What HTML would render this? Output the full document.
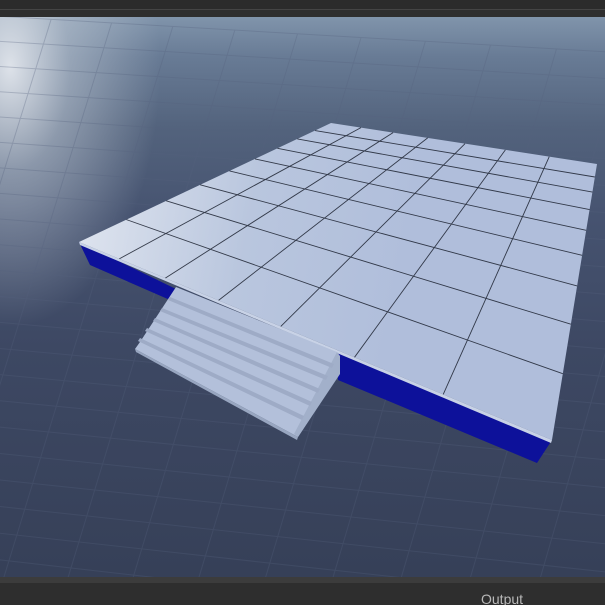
<!DOCTYPE html>
<html><head><style>
html,body{margin:0;padding:0;width:605px;height:605px;overflow:hidden;background:#2e2e2e;font-family:"Liberation Sans",sans-serif}
#top{position:absolute;left:0;top:0;width:605px;height:9px;background:#2b2b2b;border-bottom:1px solid #444}
#top2{position:absolute;left:0;top:10px;width:605px;height:7px;background:#2e2e2e}
#vp{position:absolute;left:0;top:17px;width:605px;height:560px;overflow:hidden;
background:
radial-gradient(ellipse 150px 260px at 10px 50px,rgba(228,232,238,.95),rgba(190,200,212,.55) 40%,rgba(150,165,185,0) 100%),
linear-gradient(180deg,#8094ab 0px,#687b95 40px,#53637d 110px,#465370 200px,#3d4863 330px,#364058 560px);}
#b1{position:absolute;left:0;top:577px;width:605px;height:6px;background:#3c3c3c}
#out{position:absolute;left:481px;top:592px;height:13px;line-height:15px;font-size:14px;color:#b8b8b8;overflow:hidden}
</style></head><body>
<div id="top"></div><div id="top2"></div>
<div id="vp">
<svg id="s" width="605" height="560" viewBox="0 17 605 560" xmlns="http://www.w3.org/2000/svg" style="display:block;overflow:hidden">
<defs>
<linearGradient id="tg" x1="80" y1="240" x2="400" y2="300" gradientUnits="userSpaceOnUse">
<stop offset="0" stop-color="#dde3ee"/><stop offset="0.5" stop-color="#b9c6de"/><stop offset="1" stop-color="#b0bedb"/></linearGradient>
</defs>
<g id="ground" stroke="#56627e" stroke-width="1" opacity="0.3"></g>
<polygon points="79,242 90,265 170,300 178,290" fill="#0d119a"/>
<polygon points="337,352 552,440 537,463 338,380" fill="#0d119a"/>
<polygon points="331,123 597,164 552,440 79,242" fill="url(#tg)"/>
<g id="grid" stroke="#1c2230" stroke-width="0.9" opacity="0.85"></g>
<polygon points="79,242 552,440 551,443 80,245" fill="#c8d2e6"/>
<polygon points="176,287 337,352 340,373 298,437 135,349 140,342" fill="#b3c0da"/>
<polygon points="337,352 340,356 340,374 298,437 294,434" fill="#a2b0ca"/>
<g fill="#9eabc6">
<polygon points="170,297 334,364 332,368 168,300"/>
<polygon points="162,308 328,376 326,380 160,311"/>
<polygon points="155,318 320,389 318,393 153,321"/>
<polygon points="147,328 312,402 310,406 145,331"/>
<polygon points="140,338 304,416 302,420 138,341"/>
</g>
<polygon points="135,349 298,437 297,440 136,352" fill="#98a6c0"/>
</svg>
</div>
<div id="b1"></div>
<div id="out">Output</div>
<script>
function H(p){
 var x0=p[0][0],y0=p[0][1],x1=p[1][0],y1=p[1][1],x2=p[2][0],y2=p[2][1],x3=p[3][0],y3=p[3][1];
 var dx1=x1-x2,dx2=x3-x2,dy1=y1-y2,dy2=y3-y2,sx=x0-x1+x2-x3,sy=y0-y1+y2-y3;
 var d=dx1*dy2-dx2*dy1,g=(sx*dy2-dx2*sy)/d,h=(dx1*sy-sx*dy1)/d;
 var a=x1-x0+g*x1,b=x3-x0+h*x3,c=x0,dd=y1-y0+g*y1,e=y3-y0+h*y3,f=y0;
 return function(u,v){var w=g*u+h*v+1;return [(a*u+b*v+c)/w,(dd*u+e*v+f)/w];};
}
var ns="http://www.w3.org/2000/svg";
function line(g,a,b){var l=document.createElementNS(ns,"line");l.setAttribute("x1",a[0]);l.setAttribute("y1",a[1]);l.setAttribute("x2",b[0]);l.setAttribute("y2",b[1]);g.appendChild(l);}
var m=H([[331,123],[597,164],[552,440],[79,242]]);
var G=document.getElementById("grid");
var C=7,R=9;
for(var i=1;i<C;i++){line(G,m(i/C,0),m(i/C,1));}
for(var j=1;j<R;j++){line(G,m(0,j/R),m(1,j/R));}
var gm=H([[331-900,123-140],[597+900,164-60],[552+700,440+600],[79-900,242+500]]);
var GG=document.getElementById("ground");
for(var i=0;i<=32;i++){line(GG,gm(i/32,0),gm(i/32,1));}
for(var j=0;j<=32;j++){line(GG,gm(0,j/32),gm(1,j/32));}
</script>
</body></html>
